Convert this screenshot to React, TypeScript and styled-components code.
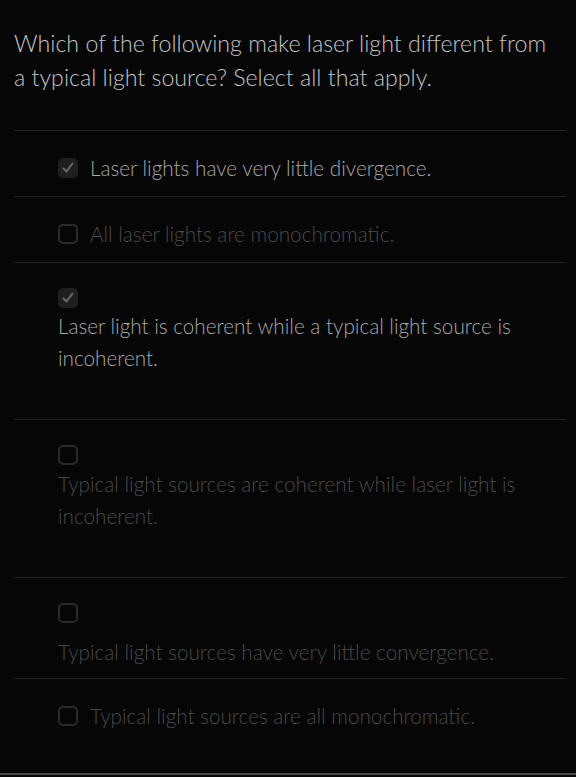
import { FC } from "react";
import styled, { createGlobalStyle } from "styled-components";

const GlobalStyle = createGlobalStyle`
  html, body {
    margin: 0;
    padding: 0;
    background: #000;
  }
  body {
    font-family: Lato, "Open Sans", sans-serif;
  }
`;

const Page = styled.div`
  width: 576px;
  height: 777px;
  background: #060606;
  display: flex;
  flex-direction: column;
  overflow: hidden;
`;

const Content = styled.div`
  padding: 0 10px 0 14px;
  flex-grow: 1;
`;

const Question = styled.h2`
  margin: 0;
  padding: 26px 12px 36px 0;
  font-weight: 300;
  font-size: 23.2px;
  line-height: 34px;
  color: #c4c4c4;
`;

const OptionList = styled.div`
  display: flex;
  flex-direction: column;
`;

const Option = styled.label<{ $stacked?: boolean; $textGap?: number; $bottom?: number }>`
  display: flex;
  flex-direction: ${(p) => (p.$stacked ? "column" : "row")};
  align-items: ${(p) => (p.$stacked ? "flex-start" : "center")};
  gap: ${(p) => (p.$stacked ? `${p.$textGap ?? 2}px` : "12px")};
  border-top: 1px solid #222;
  padding: ${(p) => (p.$stacked ? `25px 0 ${p.$bottom ?? 45}px 44px` : "21px 0 12px 44px")};
  cursor: pointer;
`;

const Box = styled.span<{ $checked?: boolean }>`
  flex-shrink: 0;
  width: 20px;
  height: 20px;
  box-sizing: border-box;
  border-radius: 5px;
  display: flex;
  justify-content: center;
  align-items: center;
  background: ${(p) => (p.$checked ? "#1f1f1f" : "transparent")};
  border: ${(p) => (p.$checked ? "none" : "2px solid #2a2a2a")};
`;

const Text = styled.span<{ $checked?: boolean }>`
  font-size: 20.7px;
  font-weight: 300;
  line-height: 32px;
  color: ${(p) => (p.$checked ? "#a8a8a8" : "#4a4a4a")};
`;

const BottomRule = styled.div`
  height: 2px;
  background: #4a4a4a;
  margin-bottom: 2px;
`;

const Check: FC = () => (
  <svg width="14" height="14" viewBox="0 0 14 14">
    <path d="M2.5 7.5 L5.5 10.5 L11.5 2.5" fill="none" stroke="#6a6a6a" strokeWidth="2" strokeLinecap="round" strokeLinejoin="round" />
  </svg>
);

type Item = {
  text: string;
  checked: boolean;
  stacked?: boolean;
  textGap?: number;
  bottom?: number;
};

const items: Item[] = [
  { text: "Laser lights have very little divergence.", checked: true },
  { text: "All laser lights are monochromatic.", checked: false },
  {
    text: "Laser light is coherent while a typical light source is incoherent.",
    checked: true,
    stacked: true,
    textGap: 2,
    bottom: 45,
  },
  {
    text: "Typical light sources are coherent while laser light is incoherent.",
    checked: false,
    stacked: true,
    textGap: 3,
    bottom: 45,
  },
  {
    text: "Typical light sources have very little convergence.",
    checked: false,
    stacked: true,
    textGap: 13,
    bottom: 10,
  },
  { text: "Typical light sources are all monochromatic.", checked: false },
];

const App = () => {
  return (
    <>
      <GlobalStyle />
      <Page>
        <Content>
          <Question>
            Which of the following make laser light different from a typical light source? Select all that apply.
          </Question>
          <OptionList>
            {items.map((it) => (
              <Option key={it.text} $stacked={it.stacked} $textGap={it.textGap} $bottom={it.bottom}>
                <Box $checked={it.checked}>{it.checked && <Check />}</Box>
                <Text $checked={it.checked}>{it.text}</Text>
              </Option>
            ))}
          </OptionList>
        </Content>
        <BottomRule />
      </Page>
    </>
  );
};

export default App;
